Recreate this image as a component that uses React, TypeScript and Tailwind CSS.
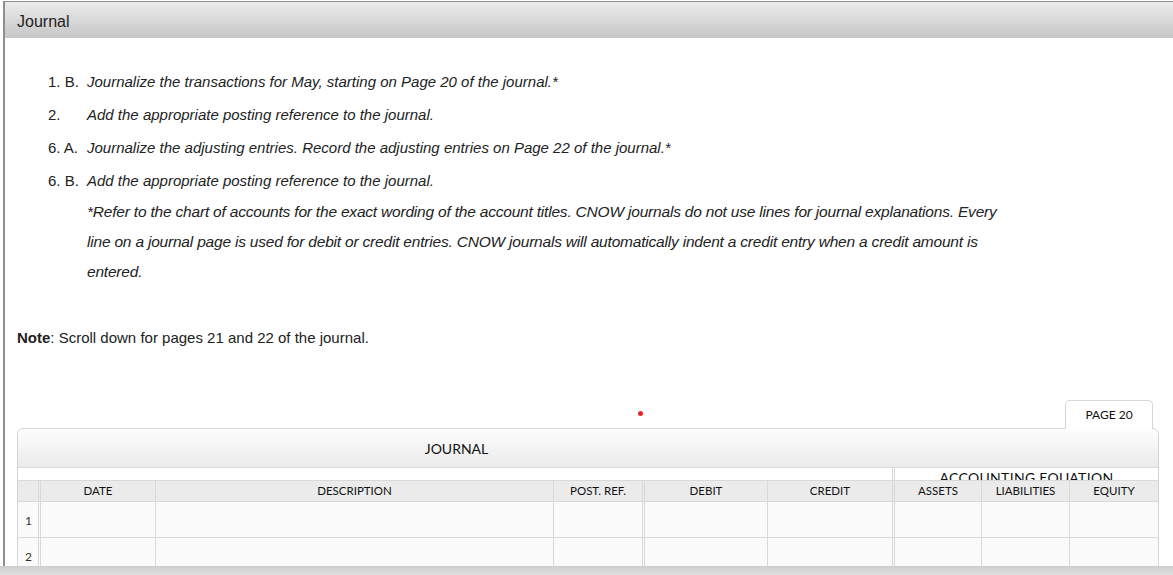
import React from "react";

const cols = [
  { w: "w-[23px]", dbl: true },
  { w: "w-[115px]", label: "DATE" },
  { w: "w-[398px]", label: "DESCRIPTION" },
  { w: "w-[91px]", label: "POST. REF.", dbl: true },
  { w: "w-[123px]", label: "DEBIT" },
  { w: "w-[127px]", label: "CREDIT", dbl: true },
  { w: "w-[87px]", label: "ASSETS" },
  { w: "w-[88px]", label: "LIABILITIES" },
  { w: "w-[88px]", label: "EQUITY", last: true },
];

function cellBorder(c: { dbl?: boolean; last?: boolean }) {
  if (c.last) return "border-b";
  if (c.dbl) return "border-double border-r-[3px] border-b";
  return "border-r border-b";
}

export default function App() {
  const items: [string, string][] = [
    ["1. B.", "Journalize the transactions for May, starting on Page 20 of the journal.*"],
    ["2.", "Add the appropriate posting reference to the journal."],
    ["6. A.", "Journalize the adjusting entries. Record the adjusting entries on Page 22 of the journal.*"],
    ["6. B.", "Add the appropriate posting reference to the journal."],
  ];
  return (
    <div className="relative w-[1173px] h-[575px] overflow-hidden bg-white text-[#222] font-['Liberation_Sans',Arial,sans-serif]">
      <div className="ml-[3px] mt-[1px] h-[600px] border-l-2 border-t border-[#8f8f8f]">
        <div className="h-[36px] bg-gradient-to-b from-[#ececec] to-[#c6c6c6] pl-[12px] pt-[10px] text-[16px] leading-[20px]">
          Journal
        </div>

        <div className="pt-[27px]">
          {items.map(([n, t]) => (
            <div key={n} className="flex h-[33px] items-center text-[15px] leading-[20px]">
              <span className="ml-[43px] w-[39px] shrink-0">{n}</span>
              <span className="italic">{t}</span>
            </div>
          ))}
          <p className="ml-[82px] w-[925px] text-[15.5px] italic leading-[30px] tracking-[-0.2px]">
            *Refer to the chart of accounts for the exact wording of the account titles. CNOW journals do not use lines for journal explanations. Every line on a journal page is used for debit or credit entries. CNOW journals will automatically indent a credit entry when a credit amount is entered.
          </p>
        </div>

        <p className="mt-[41px] ml-[12px] text-[15px] leading-[20px]">
          <b>Note</b>: Scroll down for pages 21 and 22 of the journal.
        </p>

        <div className="ml-[12px] mt-[52px] w-[1142px] font-['Lato','Open_Sans',sans-serif] text-[#111]">
          <div className="relative flex h-[28px] justify-end">
            <span className="absolute left-[621px] top-[11px] h-[5px] w-[5px] rounded-full bg-[#e3262b]" />
            <div className="relative z-10 mr-[6px] flex h-[29px] w-[88px] items-center justify-center rounded-t-[5px] border border-b-0 border-[#d6d6d6] bg-white text-[12px]">
              PAGE 20
            </div>
          </div>
          <div className="rounded-tl-[6px] rounded-tr-[6px] border border-[#d6d6d6] bg-white">
            <div className="flex h-[39px] rounded-tl-[6px] rounded-tr-[6px] border-b border-[#dcdcdc] bg-gradient-to-b from-[#fdfdfd] to-[#ebebeb]">
              <div className="flex w-[877px] items-center justify-center text-[14px]">JOURNAL</div>
            </div>
            <div className="flex h-[12px]">
              <div className="w-[877px] border-r-[3px] border-double border-[#d9d9d9]" />
              <div className="w-[263px] overflow-hidden text-center text-[14px] leading-[20px] tracking-[0.3px]">
                ACCOUNTING EQUATION
              </div>
            </div>
            <div className="flex h-[22px] border-t border-[#d9d9d9] bg-[#ebebeb] text-[11.5px]">
              {cols.map((c, i) => (
                <div
                  key={i}
                  className={`${c.w} ${cellBorder(c)} flex items-center justify-center border-[#d9d9d9]`}
                >
                  {c.label ?? ""}
                </div>
              ))}
            </div>
            {[1, 2].map((r) => (
              <div key={r} className="flex h-[36px] bg-[#fafafa] text-[12px]">
                {cols.map((c, i) => (
                  <div
                    key={i}
                    className={`${c.w} ${cellBorder(c)} flex items-center border-[#d9d9d9] ${i === 0 ? "pl-[7px] pt-[3px] text-[#333]" : ""}`}
                  >
                    {i === 0 ? r : ""}
                  </div>
                ))}
              </div>
            ))}
          </div>
        </div>
      </div>
      <div className="absolute bottom-0 left-0 h-[9px] w-full bg-gradient-to-b from-[#cdcdcd] to-[#e0e0e0]" />
    </div>
  );
}
